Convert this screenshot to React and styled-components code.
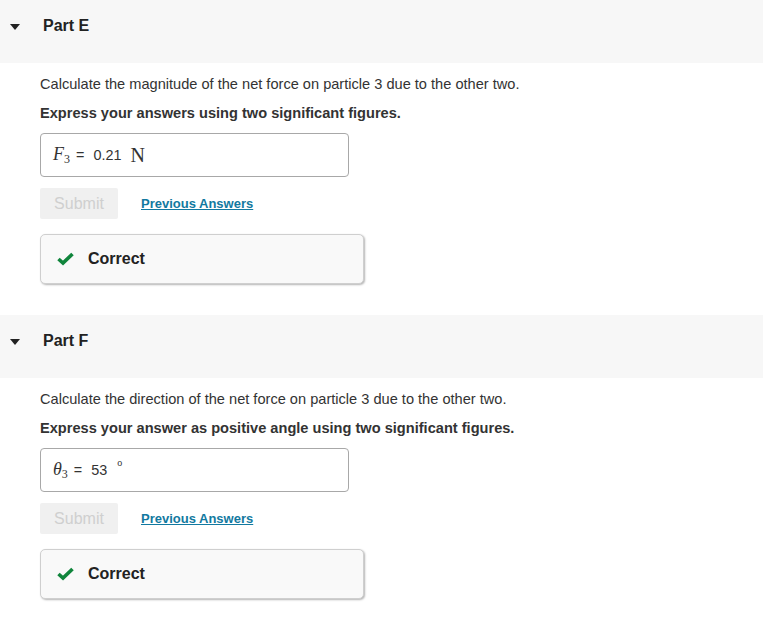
import React from "react";
import styled, { createGlobalStyle } from "styled-components";

const GlobalStyle = createGlobalStyle`
  body {
    margin: 0;
    background: #fff;
    font-family: "Liberation Sans", Arial, sans-serif;
    color: #333;
  }
`;

const Page = styled.div`
  width: 763px;
`;

const PartHeader = styled.div`
  display: flex;
  align-items: flex-start;
  height: 63px;
  box-sizing: border-box;
  padding: 17px 0 0 10px;
  background-color: #f7f7f7;
`;

const Caret = styled.span`
  width: 0;
  height: 0;
  margin-top: 7px;
  border-left: 5px solid transparent;
  border-right: 5px solid transparent;
  border-top: 6px solid #222;
`;

const PartTitle = styled.h2`
  margin: 0 0 0 23px;
  font-size: 16px;
  line-height: 18px;
  font-weight: bold;
  color: #222;
`;

const PartBody = styled.div`
  display: flex;
  flex-direction: column;
  padding: 12px 0 31px 40px;
`;

const Prompt = styled.p`
  margin: 0;
  font-size: 14.6px;
  line-height: 18px;
  color: #333;
`;

const Instruction = styled.p`
  margin: 11px 0 0;
  font-size: 14.6px;
  line-height: 18px;
  font-weight: bold;
  color: #333;
`;

const AnswerBox = styled.div`
  display: flex;
  align-items: center;
  width: 309px;
  height: 44px;
  box-sizing: border-box;
  margin-top: 11px;
  padding-left: 12px;
  border: 1px solid #a8a8a8;
  border-radius: 4px;
  font-size: 14.4px;
  color: #333;
`;

const MathVar = styled.span`
  font-family: "Liberation Serif", "Times New Roman", serif;
  font-style: italic;
  font-size: 18px;
  color: #333;

  sub {
    font-style: normal;
    font-size: 12px;
    vertical-align: -3px;
  }
`;

const Equals = styled.span`
  margin: 0 9px 0 6px;
`;

const Unit = styled.span`
  margin-left: ${(props) => props.$gap}px;
  font-family: "Liberation Serif", "Times New Roman", serif;
  font-size: ${(props) => (props.$sup ? 10 : 20)}px;
  position: relative;
  top: ${(props) => (props.$sup ? -8 : 0)}px;
  color: #333;
`;

const Actions = styled.div`
  display: flex;
  align-items: center;
  margin-top: 11px;
`;

const SubmitButton = styled.button`
  width: 78px;
  height: 31px;
  padding: 0;
  border: 0;
  border-radius: 2px;
  background-color: #f0f0f0;
  color: #cfcfcf;
  font-family: "Liberation Sans", Arial, sans-serif;
  font-size: 16px;
  cursor: default;
`;

const PreviousLink = styled.a`
  margin-left: 23px;
  font-size: 13px;
  font-weight: bold;
  color: #1279a0;
  text-decoration: underline;
  cursor: pointer;
`;

const Feedback = styled.div`
  display: flex;
  align-items: center;
  width: 324px;
  height: 50px;
  box-sizing: border-box;
  margin-top: 15px;
  padding-left: 16px;
  background-color: #f9f9f9;
  border: 1px solid #cfcfcf;
  border-radius: 5px;
  box-shadow: 1px 1px 2px #b5b5b5;
`;

const FeedbackText = styled.span`
  margin-left: 14px;
  font-size: 16px;
  font-weight: bold;
  color: #222;
`;

const Check = () => (
  <svg width="17" height="14" viewBox="0 0 17 14">
    <path d="M1.5 7 L6 11 L15.5 2" fill="none" stroke="#10853c" strokeWidth="3.6" />
  </svg>
);

const parts = [
  {
    id: "E",
    prompt: "Calculate the magnitude of the net force on particle 3 due to the other two.",
    instruction: "Express your answers using two significant figures.",
    symbol: "F",
    value: "0.21",
    unit: "N",
  },
  {
    id: "F",
    prompt: "Calculate the direction of the net force on particle 3 due to the other two.",
    instruction: "Express your answer as positive angle using two significant figures.",
    symbol: "θ",
    value: "53",
    unit: "o",
    sup: true,
  },
];

const Part = ({ part }) => (
  <section>
    <PartHeader>
      <Caret />
      <PartTitle>Part {part.id}</PartTitle>
    </PartHeader>
    <PartBody>
      <Prompt>{part.prompt}</Prompt>
      <Instruction>{part.instruction}</Instruction>
      <AnswerBox>
        <MathVar>
          {part.symbol}
          <sub>3</sub>
        </MathVar>
        <Equals>=</Equals>
        <span>{part.value}</span>
        <Unit $sup={part.sup} $gap={part.sup ? 10 : 9}>
          {part.unit}
        </Unit>
      </AnswerBox>
      <Actions>
        <SubmitButton disabled>Submit</SubmitButton>
        <PreviousLink>Previous Answers</PreviousLink>
      </Actions>
      <Feedback>
        <Check />
        <FeedbackText>Correct</FeedbackText>
      </Feedback>
    </PartBody>
  </section>
);

const App = () => (
  <Page>
    <GlobalStyle />
    {parts.map((part) => (
      <Part key={part.id} part={part} />
    ))}
  </Page>
);

export default App;
